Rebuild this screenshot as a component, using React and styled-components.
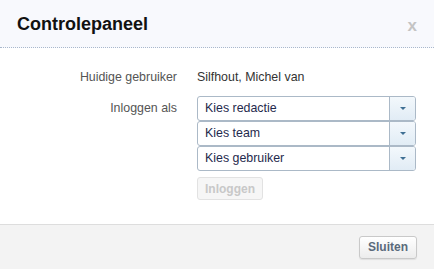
import React from 'react';
import styled, { createGlobalStyle } from 'styled-components';

const GlobalStyle = createGlobalStyle`
  html, body {
    margin: 0;
    padding: 0;
    background: #ffffff;
  }
  body {
    font-family: 'Liberation Sans', Arial, sans-serif;
  }
`;

const Dialog = styled.div`
  width: 434px;
  height: 269px;
  display: flex;
  flex-direction: column;
  background: #ffffff;
  overflow: hidden;
`;

const Header = styled.div`
  height: 48px;
  box-sizing: border-box;
  display: flex;
  align-items: center;
  justify-content: space-between;
  padding: 0 17px 0 17px;
  background: #f8f9fd;
  border-bottom: 1px dotted #a9b8cc;
`;

const Title = styled.h3`
  margin: 0;
  font-size: 18px;
  font-weight: bold;
  color: #111111;
  padding-top: 1px;
`;

const Close = styled.span`
  font-size: 17px;
  font-weight: bold;
  color: #c4c4c4;
  padding-top: 4px;
`;

const Body = styled.div`
  flex: 1;
  display: grid;
  grid-template-columns: 177px 219px;
  column-gap: 20px;
  row-gap: 11px;
  align-content: start;
  padding-top: 22px;
`;

const Label = styled.div`
  text-align: right;
  font-size: 12.4px;
  color: #555555;
  line-height: 15px;
  padding-top: ${props => props.offset || 0}px;
`;

const Value = styled.div`
  font-size: 12.4px;
  color: #333333;
  line-height: 15px;
`;

const Stack = styled.div`
  display: flex;
  flex-direction: column;
  align-items: flex-start;
`;

const Select = styled.div`
  width: 219px;
  height: 25px;
  box-sizing: border-box;
  display: flex;
  border: 1px solid #abb9c7;
  border-radius: 3px;
  background: #ffffff;
`;

const SelectText = styled.div`
  flex: 1;
  font-size: 12.4px;
  color: #1f2a4d;
  line-height: 23px;
  padding-left: 7px;
`;

const Caret = styled.div`
  width: 25px;
  display: flex;
  align-items: center;
  justify-content: center;
  border-left: 1px solid #abb9c7;
  border-radius: 0 2px 2px 0;
  background: linear-gradient(#f3f8fc, #e1ecf5);

  &::after {
    content: '';
    border-left: 3px solid transparent;
    border-right: 3px solid transparent;
    border-top: 3px solid #3f6f93;
  }
`;

const Button = styled.button`
  font-family: 'Liberation Sans', Arial, sans-serif;
  font-size: 12px;
  font-weight: bold;
  height: ${props => props.h || 23}px;
  padding: 0 ${props => props.px || 7}px;
  border-radius: 3px;
  cursor: pointer;
  border: 1px solid ${props => (props.disabled ? '#e2e2e2' : '#c9c9c9')};
  color: ${props => (props.disabled ? '#c8c8c8' : '#5a6a7b')};
  background: ${props => (props.disabled ? '#f6f6f6' : 'linear-gradient(#ffffff, #ececec)')};
  box-shadow: ${props => (props.disabled ? 'none' : '0 1px 1px rgba(0,0,0,0.08)')};
`;

const LoginButton = styled(Button)`
  margin-top: 6px;
  width: 66px;
`;

const Footer = styled.div`
  height: 44px;
  display: flex;
  align-items: center;
  justify-content: flex-end;
  padding-right: 17px;
  background: #f3f3f3;
  border-top: 1px solid #dddddd;
`;

const selects = ['Kies redactie', 'Kies team', 'Kies gebruiker'];

export default function App() {
  return (
    <>
      <GlobalStyle />
      <Dialog>
        <Header>
          <Title>Controlepaneel</Title>
          <Close>x</Close>
        </Header>
        <Body>
          <Label>Huidige gebruiker</Label>
          <Value>Silfhout, Michel van</Value>
          <Label offset={5}>Inloggen als</Label>
          <Stack>
            {selects.map(s => (
              <Select key={s}>
                <SelectText>{s}</SelectText>
                <Caret />
              </Select>
            ))}
            <LoginButton disabled>Inloggen</LoginButton>
          </Stack>
        </Body>
        <Footer>
          <Button h={23} px={8}>Sluiten</Button>
        </Footer>
      </Dialog>
    </>
  );
}
